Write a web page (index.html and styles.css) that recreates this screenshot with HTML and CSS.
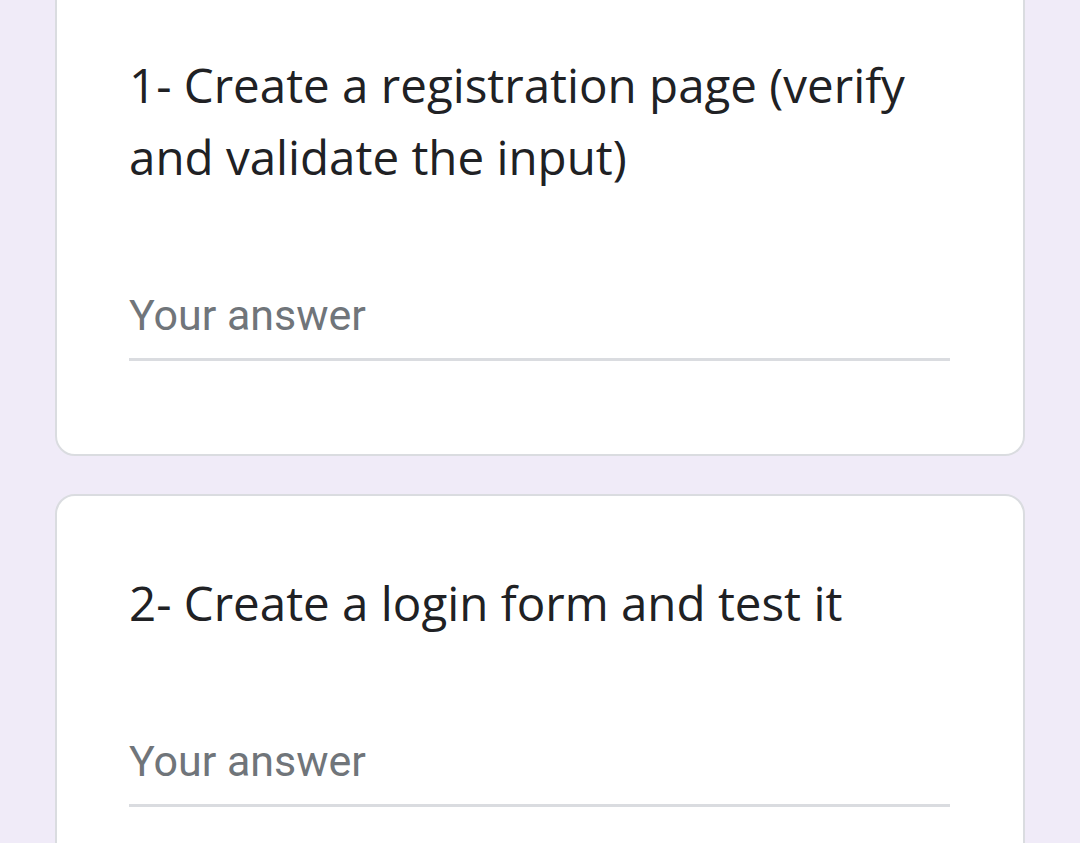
FILE: index.html
```html
<!DOCTYPE html>
<html lang="en">
<head>
  <meta charset="UTF-8">
  <meta name="viewport" content="width=device-width, initial-scale=1.0">
  <title>Assignment</title>
  <link rel="stylesheet" href="styles.css">
</head>
<body>

  <div class="form-list">

    <div class="question-card first-card">
      <div class="question-title">1- Create a registration page (verify and validate the input)</div>
      <div class="answer-field"><span class="answer-placeholder">Your answer</span></div>
    </div>

    <div class="question-card">
      <div class="question-title">2- Create a login form and test it</div>
      <div class="answer-field"><span class="answer-placeholder">Your answer</span></div>
    </div>

  </div>

</body>
</html>
```

FILE: styles.css
```css
body{
  margin: 0;
  background-color: #f0ebf8;
  overflow: hidden;
}
.form-list{
  display: flex;
  flex-direction: column;
  gap: 38px;
  padding-left: 55px;
  padding-right: 55px;
}
.question-card{
  background-color: #ffffff;
  border: 2px solid #dadce0;
  border-radius: 20px;
  padding: 71px 73px 93px 72px;
}
.first-card{
  margin-top: -24px;
}
.question-title{
  font-family: "Open Sans", sans-serif;
  font-size: 47.5px;
  line-height: 72px;
  color: #202124;
  padding-right: 30px;
}
.answer-field{
  margin-top: 97px;
  font-family: Roboto, sans-serif;
  font-size: 43px;
  line-height: 50px;
  color: #70757a;
  padding-bottom: 18px;
  border-bottom: 3px solid #dadce0;
}
```
